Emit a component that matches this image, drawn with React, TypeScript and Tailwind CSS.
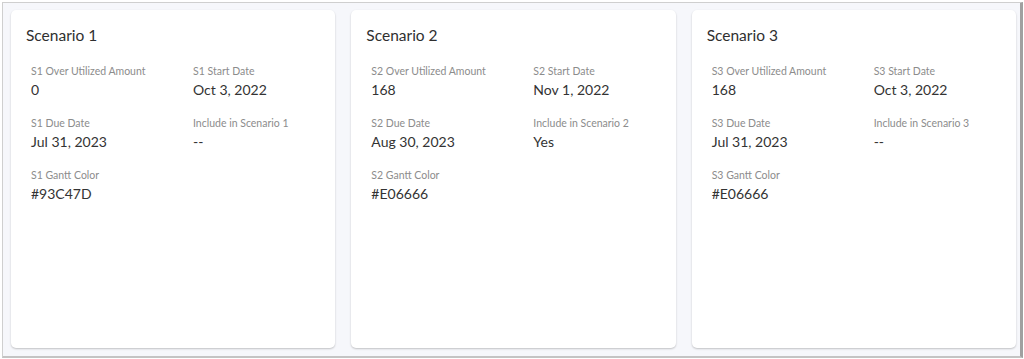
const scenarios = [
  { n: 1, amount: "0", start: "Oct 3, 2022", due: "Jul 31, 2023", include: "--", color: "#93C47D" },
  { n: 2, amount: "168", start: "Nov 1, 2022", due: "Aug 30, 2023", include: "Yes", color: "#E06666" },
  { n: 3, amount: "168", start: "Oct 3, 2022", due: "Jul 31, 2023", include: "--", color: "#E06666" },
];

function Field({ label, value }: { label: string; value: string }) {
  return (
    <div className="flex flex-col">
      <span className="text-[10.5px] leading-[14px] text-[#8c8c8c]">{label}</span>
      <span className="mt-[2px] text-[14px] leading-[20px] text-[#333]">{value}</span>
    </div>
  );
}

function ScenarioCard({ s }: { s: (typeof scenarios)[number] }) {
  return (
    <div className="flex-1 h-[338px] bg-white rounded-[5px] shadow-[0_1px_2px_rgba(0,0,0,0.22)] pt-[15px] px-[15px]">
      <h2 className="text-[15.5px] leading-[20px] text-[#2f2f2f]">Scenario {s.n}</h2>
      <div className="mt-[19px] pl-[5px] grid grid-cols-[162px_1fr] gap-y-[16px]">
        <Field label={`S${s.n} Over Utilized Amount`} value={s.amount} />
        <Field label={`S${s.n} Start Date`} value={s.start} />
        <Field label={`S${s.n} Due Date`} value={s.due} />
        <Field label={`Include in Scenario ${s.n}`} value={s.include} />
        <Field label={`S${s.n} Gantt Color`} value={s.color} />
      </div>
    </div>
  );
}

export default function App() {
  return (
    <div className="w-[1024px] h-[359px] bg-white pt-[2px] pl-[2px]" style={{ fontFamily: "Lato, 'Noto Sans', sans-serif" }}>
      <div className="w-[1021px] h-[356px] bg-[#f6f7fb] border-l border-t border-[#cfcfcf] border-r-[3px] border-r-[#a0a0a0] border-b-2 border-b-[#c4c4c4] flex gap-4 pl-[8px] pt-[7px] pr-[4px]">
        {scenarios.map((s) => (
          <ScenarioCard key={s.n} s={s} />
        ))}
      </div>
    </div>
  );
}
